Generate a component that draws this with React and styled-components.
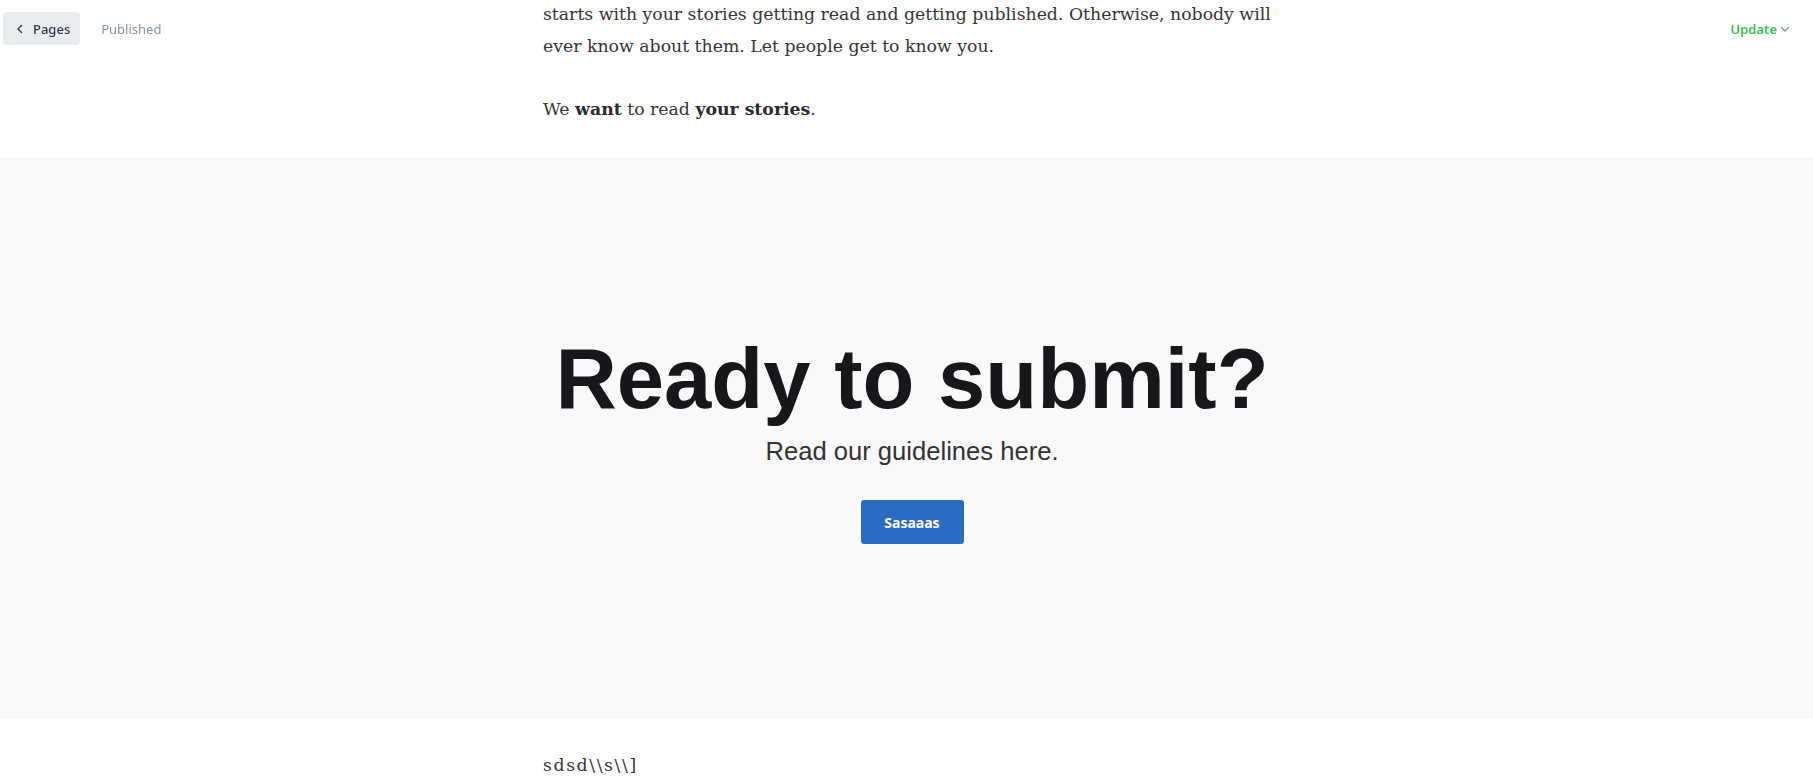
import React from 'react';
import styled, { createGlobalStyle } from 'styled-components';

const GlobalStyle = createGlobalStyle`
  html, body {
    margin: 0;
    padding: 0;
    background: #ffffff;
    overflow: hidden;
  }
  * {
    box-sizing: border-box;
  }
`;

const Toolbar = styled.header`
  position: fixed;
  top: 0;
  left: 0;
  right: 0;
  display: flex;
  align-items: center;
  justify-content: space-between;
  padding: 12px 23px 0 3px;
  font-family: 'Noto Sans', 'Open Sans', sans-serif;
  font-size: 13px;
  z-index: 10;
`;

const ToolGroup = styled.div`
  display: flex;
  align-items: center;
  gap: ${props => props.gap || 0}px;
`;

const BackButton = styled.button`
  display: flex;
  align-items: center;
  gap: 9px;
  height: 33px;
  padding: 0 10px 0 13px;
  border: none;
  border-radius: 4px;
  background: #e9ecef;
  color: #2d3748;
  font-family: inherit;
  font-size: 13px;
  font-weight: 500;
`;

const Status = styled.span`
  color: #8795a5;
`;

const UpdateButton = styled.button`
  display: flex;
  align-items: center;
  gap: 3px;
  padding: 0;
  border: none;
  background: none;
  color: #36c84a;
  font-family: inherit;
  font-size: 13px;
  font-weight: 600;
`;

const Page = styled.main`
  padding-left: 11px;
  font-family: 'DejaVu Serif', 'Liberation Serif', serif;
  color: #363636;
`;

const Column = styled.div`
  width: 738px;
  margin: 0 auto;
`;

const Paragraph = styled.p`
  margin: 0 0 ${props => props.gap || 0}px;
  font-size: 17.3px;
  line-height: 32px;
  letter-spacing: ${props => props.spacing || 0}px;
  white-space: nowrap;

  strong {
    font-weight: 700;
    color: #2b2b2b;
  }
`;

const Intro = styled(Column)`
  margin-top: -2px;
  padding-bottom: 32px;
`;

const CallToAction = styled.section`
  margin-left: -11px;
  padding: 179px 0 175px 11px;
  background: #f9f9f9;
  display: flex;
  flex-direction: column;
  align-items: center;
  font-family: 'Liberation Sans', Arial, sans-serif;
`;

const Heading = styled.h1`
  margin: 0;
  font-size: 85px;
  line-height: 86px;
  font-weight: 700;
  color: #16171a;
`;

const Subtitle = styled.p`
  margin: 14px 0 0;
  font-size: 25.6px;
  line-height: 31px;
  color: #333333;
`;

const PrimaryButton = styled.button`
  margin-top: 33px;
  width: 103px;
  height: 44px;
  border: none;
  border-radius: 3px;
  background: #2a6bc3;
  color: #ffffff;
  font-family: 'Noto Sans', 'Open Sans', sans-serif;
  font-size: 14px;
  font-weight: 700;
`;

const Outro = styled(Column)`
  padding-top: 30px;
`;

const ChevronLeft = () => (
  <svg width="8" height="10" viewBox="0 0 8 10" fill="none">
    <path d="M5.5 1.5 L2 5 L5.5 8.5" stroke="#2d3748" strokeWidth="1.4" strokeLinecap="round" strokeLinejoin="round" />
  </svg>
);

const ChevronDown = () => (
  <svg width="10" height="8" viewBox="0 0 10 8" fill="none">
    <path d="M1.5 2.5 L5 6 L8.5 2.5" stroke="#8a939c" strokeWidth="1.2" strokeLinecap="round" strokeLinejoin="round" />
  </svg>
);

export default function App() {
  return (
    <>
      <GlobalStyle />
      <Toolbar>
        <ToolGroup gap={21}>
          <BackButton>
            <ChevronLeft />
            Pages
          </BackButton>
          <Status>Published</Status>
        </ToolGroup>
        <ToolGroup>
          <UpdateButton>
            Update
            <ChevronDown />
          </UpdateButton>
        </ToolGroup>
      </Toolbar>
      <Page>
        <Intro>
          <Paragraph gap={31}>
            starts with your stories getting read and getting published. Otherwise, nobody will
            <br />
            ever know about them. Let people get to know you.
          </Paragraph>
          <Paragraph>
            We <strong>want</strong> to read <strong>your stories</strong>.
          </Paragraph>
        </Intro>
        <CallToAction>
          <Heading>Ready to submit?</Heading>
          <Subtitle>Read our guidelines here.</Subtitle>
          <PrimaryButton>Sasaaas</PrimaryButton>
        </CallToAction>
        <Outro>
          <Paragraph spacing={1.6}>sdsd\\s\\]</Paragraph>
        </Outro>
      </Page>
    </>
  );
}
